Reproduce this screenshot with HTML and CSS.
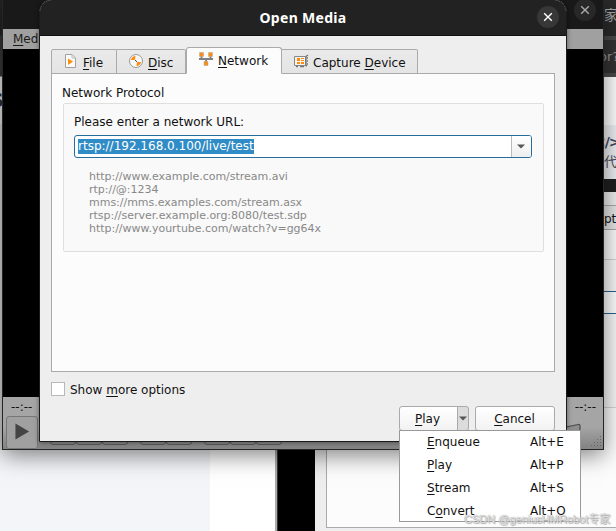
FILE: index.html
```html
<!DOCTYPE html>
<html lang="en">
<head>
<meta charset="utf-8">
<title>Open Media</title>
<link rel="stylesheet" href="styles.css">
</head>
<body>
<div class="desktop">
  <div class="page-left"></div>
  <div class="page-mid"></div>
  <div class="old-window"><div class="old-video"></div><div class="old-dialog"><div class="old-panel"></div></div></div>
  <div class="left-edge"><span class="edge-letter">S</span></div>
  <div class="browser">
    <div class="b-tabs">家</div>
    <div class="b-url"><span>or?</span></div>
    <div class="b-page"></div>
    <div class="b-tools"><b>&lt;/&gt;</b><span>代码</span></div>
    <div class="b-title"></div>
    <div class="b-gap"></div>
    <div class="b-tab">pt</div>
    <div class="b-panel"></div>
    <div class="b-group"></div>
    <div class="b-combo"></div>
    <div class="b-rest"></div>
    <div class="b-bottom"></div>
  </div>

  <div class="player">
    <div class="player-title"><span class="close dim"><svg viewBox="0 0 22 22"><path d="M7.200 7.200l7.600 7.600M14.800 7.200l-7.600 7.600"/></svg></span></div>
    <div class="player-menu"><u>M</u>edia</div>
    <div class="video"></div>
    <div class="controls">
      <div class="time"><span>--:--</span><span>--:--</span></div>
      <div class="buttons">
        <div class="play-btn"><svg viewBox="0 0 32 32"><path d="M9 7L23.500 15.500L9 24z"/></svg></div>
        <div class="group g1"><i></i><i></i><i></i></div>
        <div class="group g2"><i></i><i></i></div>
        <div class="group g3"><i></i><i></i><i></i></div>
      </div>
      <svg class="volume" viewBox="0 0 16 16"><path d="M0 4L12 1.500Q14 1 14 3V16"/></svg>
      <svg class="grip" viewBox="0 0 12 12"><path d="M10 1.500h1M7 4.500h1M10 4.500h1M4 7.500h1M7 7.500h1M10 7.500h1M1 10.500h1M4 10.500h1M7 10.500h1M10 10.500h1"/></svg>
    </div>
  </div>

  <div class="dialog">
    <div class="titlebar"><h1>Open Media</h1><span class="close"><svg viewBox="0 0 22 22"><path d="M7.200 7.200l7.600 7.600M14.800 7.200l-7.600 7.600"/></svg></span></div>
    <div class="content">
      <div class="tabs">
        <div class="tab file"><svg viewBox="0 0 16 16"><path d="M2.500 1.500h6.500l3.500 3.500v9.500h-10z" fill="#fafafa" stroke="#a0a0a0"/><path d="M9 1.500V5H12.500" fill="none" stroke="#bbb"/><path d="M5 5.500L10 8.500L5 12z" fill="#ff8c0a"/></svg><span><u>F</u>ile</span></div>
        <div class="tab disc"><svg viewBox="0 0 16 16"><circle cx="8" cy="8" r="6.500" fill="#f8f8f8" stroke="#999"/><path d="M7 7L3 7A5 5 0 0 1 7.500 3zM9 9L13 9A5 5 0 0 1 8.500 13z" fill="#ff8c0a"/><circle cx="8" cy="8" r="2" fill="#eee"/><path d="M7 7h1v1H7zM8 8h1v1H8z" fill="#555"/></svg><span><u>D</u>isc</span></div>
        <div class="tab network active"><svg viewBox="0 0 16 16"><path d="M3.500 5v3M12.500 5v3M8 8v3M1 8h14" fill="none" stroke="#808080" stroke-width="1.800"/><path d="M1.500 1.500h4v4h-4zM10.500 1.500h4v4h-4zM6 10.500h4v4H6z" fill="#ff8c0a" stroke="#aaa" stroke-width=".5"/></svg><span><u>N</u>etwork</span></div>
        <div class="tab capture"><svg viewBox="0 0 16 16"><path d="M1.500 3.500h11v9h-11z" fill="#f4f4f4" stroke="#888"/><path d="M15 2l-2 1.500v9l1 .5M3 13.500h2M7 13.500h4M14 5h1M14 8h1M14 11h1" fill="none" stroke="#777" stroke-width="1.400"/><path d="M4 5h3v3H4zM8 5h3v1H8zM8 7h3v1H8zM4 9h3v2H4zM8 9h3v2H8z" fill="#ff8c0a"/></svg><span>Capture <u>D</u>evice</span></div>
      </div>
      <div class="panel">
        <div class="group-title">Network Protocol</div>
        <div class="group-box">
          <label>Please enter a network URL:</label>
          <div class="combo"><div class="combo-text"><span>rtsp://192.168.0.100/live/test</span></div><div class="combo-arrow"><svg viewBox="0 0 8 5"><path d="M0 .5h8L4 4.500z"/></svg></div></div>
          <div class="hints">http://www.example.com/stream.avi<br>rtp://@:1234<br>mms://mms.examples.com/stream.asx<br>rtsp://server.example.org:8080/test.sdp<br>http://www.yourtube.com/watch?v=gg64x</div>
        </div>
      </div>
      <div class="options"><span class="check"></span><span class="options-label">Show <u>m</u>ore options</span></div>
      <div class="actions">
        <div class="btn play"><u>P</u>lay</div>
        <div class="btn drop"><svg viewBox="0 0 8 5"><path d="M0 .5h8L4 4.500z"/></svg></div>
        <div class="btn cancel"><span><u>C</u>ancel</span></div>
      </div>
    </div>
  </div>

  <div class="menu">
    <div class="item"><span><u>E</u>nqueue</span><span>Alt+E</span></div>
    <div class="item"><span><u>P</u>lay</span><span>Alt+P</span></div>
    <div class="item"><span><u>S</u>tream</span><span>Alt+S</span></div>
    <div class="item"><span>C<u>o</u>nvert</span><span>Alt+O</span></div>
  </div>
  <div class="watermark">CSDN @geniusHMRobot专家</div>
</div>
</body>
</html>
```
FILE: styles.css
```css
* { box-sizing: border-box; }
body { margin: 0; font: 12px/16px "DejaVu Sans", "Noto Sans CJK SC", sans-serif; color: #111; }
u { text-decoration-thickness: 1px; text-underline-offset: 2px; }
svg { display: block; }
.desktop { position: relative; width: 616px; height: 531px; overflow: hidden; background: #f4f5f8; white-space: nowrap; }

/* windows behind the player */
.page-left { position: absolute; left: 0; top: 440px; width: 210px; height: 91px; background: #f4f5f8; }
.page-mid { position: absolute; left: 210px; top: 440px; width: 66px; height: 91px; background: #fff; }
.old-window { position: absolute; left: 275px; top: 400px; width: 341px; height: 131px; display: flex; border-left: 2px solid #aaa; background: #eee; }
.old-video { width: 38px; background: #000; border-left: 1px solid #333; }
.old-dialog { flex: 1; padding-left: 11px; background: #eee; }
.old-panel { height: 128px; background: #fcfcfc; border: 1px solid #aaa; border-width: 0 0 1px 1px; }
.left-edge { position: absolute; left: 0; top: 0; width: 3px; height: 450px; overflow: hidden; background: linear-gradient(#242424 0 35px, #383838 36px 76px, #e8e8e8 77px 124px, #d8d9db 124px); }
.edge-letter { display: block; margin: 88px 0 0 -10px; font: bold 19px/24px "DejaVu Sans", sans-serif; color: #333; }
.browser { position: absolute; left: 603px; top: 0; width: 13px; height: 450px; overflow: hidden; display: flex; flex-direction: column; }
.browser > div { flex: none; border-color: #aaa; border-style: solid; border-width: 0; }
.b-tabs { height: 36px; padding: 5px 0 0 1px; background: #2b2b2b; color: #aaa; font-size: 14px; line-height: 20px; }
.b-url { height: 41px; padding-top: 9px; background: #333; border-top-width: 4px !important; border-bottom-width: 4px !important; border-color: #4a4a4a !important; color: #999; font-size: 13px; }
.b-url span { margin-left: -4px; }
.b-page { height: 48px; background: #fff; }
.b-tools { height: 54px; padding-top: 7px; background: #eeeff2; color: #44465a; display: flex; flex-direction: column; line-height: 20px; }
.b-tools b { margin-left: -9px; font-size: 14px; letter-spacing: -1px; }
.b-tools span { padding-left: 1px; font-size: 13px; }
.b-title { height: 13px; background: #202020; }
.b-gap { height: 13px; background: #eee; }
.b-tab { height: 25px; padding: 5px 0 0 1px; background: #e6e6e6; border-top-width: 1px !important; border-bottom-width: 1px !important; }
.b-panel { height: 29px; background: #fcfcfc; }
.b-group { height: 32px; background: #f9f9f9; border-top: 1px solid #d5d5d5 !important; }
.b-combo { height: 23px; background: #fff; border-top: 1px solid #27658c !important; border-bottom: 1px solid #27658c !important; }
.b-rest { height: 93px; background: #f9f9f9; }
.b-bottom { height: 43px; background: #fcfcfc; border-top: 1px solid #d5d5d5 !important; }

/* media player */
.player { position: absolute; left: 2px; top: 0; width: 602px; height: 450px; display: flex; flex-direction: column; border: 1px solid #252525; border-top: 0; box-shadow: 0 5px 22px rgba(0,0,0,.5); }
.player-title { height: 29px; padding-right: 7px; display: flex; justify-content: flex-end; background: #191919; }
.player-menu { height: 20px; padding: 2px 10px; background: #a0a0a0; color: #1c1c1c; }
.video { flex: 1; background: #000; }
.controls { position: relative; height: 52px; background: linear-gradient(#a5a5a5 30px, #858585 50px); }
.time { display: flex; justify-content: space-between; padding: 2px 7px 0 9px; line-height: 16px; }
.time span:first-child { margin-left: -1px; }
.buttons { display: flex; padding-left: 3px; }
.play-btn { width: 32px; height: 33px; margin-top: 1px; border: 1px solid #777; border-radius: 3px; background: #a0a0a0; }
.play-btn path { fill: #444; }
.group { display: flex; height: 30px; }
.group i { width: 26px; border: 1px solid #5a5d5a; border-radius: 3px; }
.g1 { margin-left: 12px; } .g2 { margin-left: 12px; } .g3 { margin-left: 12px; }
.volume { position: absolute; left: 563px; top: 26px; width: 16px; height: 16px; fill: #8d8d8d; stroke: #4a4a4a; stroke-width: 1.2; }
.grip { position: absolute; right: 1px; bottom: 2px; width: 12px; height: 12px; stroke: #666; }
.close { width: 22px; height: 22px; border-radius: 50%; background: #373737; }
.close svg { fill: none; stroke: #fff; stroke-width: 1.4; }
.close.dim { margin-top: -1px; background: #282828; }
.close.dim svg { stroke: #aaa; }

/* open media dialog */
.dialog { position: absolute; left: 39px; top: -1px; width: 528px; height: 443px; overflow: hidden; border: 1px solid #1b1b1b; border-radius: 13px 13px 0 0; background: #eee; box-shadow: 0 1px 5px rgba(0,0,0,.45); }
.titlebar { height: 36px; padding-right: 7px; display: flex; align-items: center; background: #222; border-bottom: 1px solid #111; }
.titlebar h1 { flex: 1; margin: 0; padding-left: 29px; text-align: center; font: bold 14px/18px "Noto Sans", "DejaVu Sans", sans-serif; letter-spacing: .3px; color: #fff; }
.titlebar .close { margin-top: -2px; }
.content { padding: 11px 11px 0; }
.tabs { display: flex; align-items: flex-end; height: 27px; position: relative; margin-bottom: -1px; }
.tab { display: flex; align-items: center; height: 25px; padding: 2px 0 0 12px; border: 1px solid #aaa; border-left-width: 0; border-radius: 0 2px 0 0; background: linear-gradient(#eaeaea, #e4e4e4); }
.tab svg { width: 16px; height: 16px; margin-top: -3px; }
.tab span { margin-left: 3px; }
.tab.file { width: 66px; border-left-width: 1px; border-radius: 2px 0 0 0; }
.tab.file svg { margin-left: -1px; }
.tab.disc { width: 69px; padding-left: 11px; }
.tab.disc span { margin-left: 4px; }
.tab.network { width: 96px; height: 27px; padding: 1px 0 0 11px; border-left-width: 1px; border-bottom-color: #fcfcfc; border-radius: 3px 3px 0 0; background: #fcfcfc; }
.tab.network span { margin-left: 4px; }
.tab.network svg { margin-top: -4px; }
.tab.capture { width: 136px; padding-left: 11px; }
.tab.capture span { margin-left: 4px; }
.tab.file span { margin-left: 4px; }
.panel { height: 299px; padding: 11px 10px 0 11px; border: 1px solid #aaa; background: #fcfcfc; }
.group-title { margin-left: -1px; height: 18px; line-height: 16px; }
.group-box { height: 149px; padding: 9px 11px 0 10px; border: 1px solid #dfdfdf; border-radius: 2px; background: #f9f9f9; }
.group-box label { display: block; height: 22px; line-height: 18px; }
.combo { display: flex; height: 23px; border: 1px solid #266d9e; border-radius: 3px; background: #fff; }
.combo-text { flex: 1; padding: 3px; line-height: 15px; }
.combo-text span { display: block; width: 176px; height: 15px; line-height: 15px; background: #308cc6; color: #fff; }
.combo-arrow { width: 20px; padding: 8px 0 0 5px; border-left: 1px solid #bbb; border-radius: 0 2px 2px 0; background: linear-gradient(#fff, #eee); }
.combo-arrow svg, .drop svg { width: 8px; height: 5px; fill: #555; }
.hints { margin: 12px 0 0 15px; font-size: 11px; line-height: 13px; letter-spacing: -.02px; color: #888; }
.options { display: flex; align-items: center; gap: 5px; height: 16px; margin-top: 9px; }
.options-label { padding-top: 2px; }
.check { width: 14px; height: 14px; border: 1px solid #b8b8b8; background: #fff; }
.actions { display: flex; margin-top: 9px; justify-content: flex-end; }
.btn { height: 25px; padding-top: 4px; border: 1px solid #aaa; border-radius: 3px; background: linear-gradient(#fff, #f2f2f2); text-align: center; }
.btn.play { width: 59px; padding-right: 2px; border-radius: 3px 0 0 3px; }
.btn.drop { width: 12px; margin-left: -1px; padding: 9px 1px; border-radius: 0 3px 3px 0; background: #dcdcdc; }
.btn.cancel { width: 80px; margin-left: 6px; padding-right: 1px; }

.menu { position: absolute; left: 399px; top: 430px; width: 182px; height: 92px; border: 1px solid #999; background: #fff; }
.item { display: flex; height: 23px; padding: 3px 0 0 27px; }
.item span:first-child { width: 103px; }
.watermark { position: absolute; left: 464px; top: 511px; font: 11px/17px "Liberation Sans", "Noto Sans CJK SC", sans-serif; color: rgba(255,255,255,.7); text-shadow: 0 0 1px #888, 1px 1px 1px #aaa; }
```
